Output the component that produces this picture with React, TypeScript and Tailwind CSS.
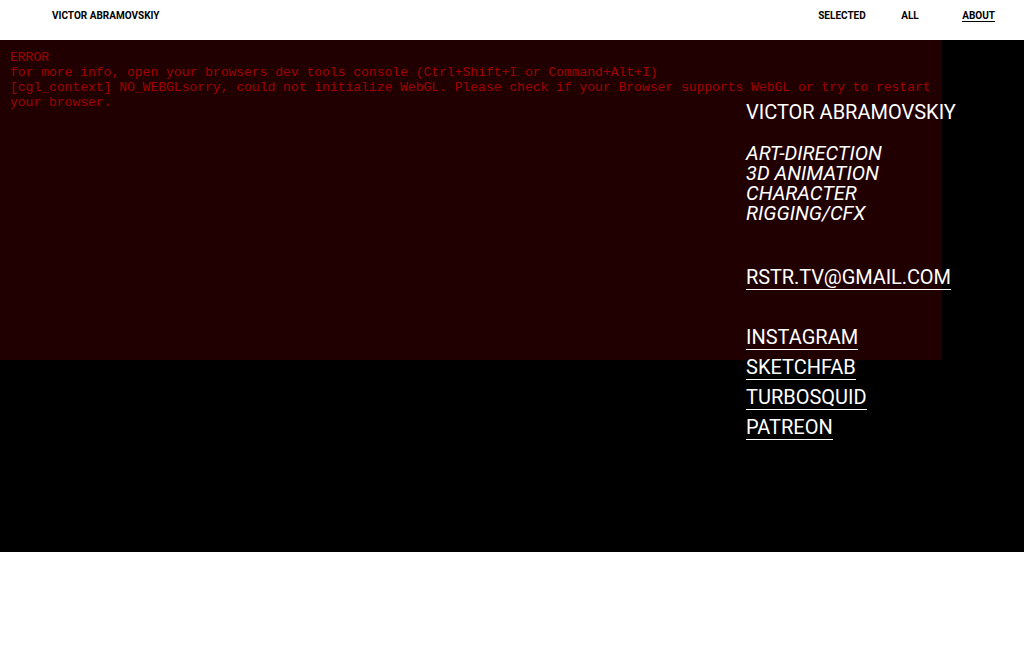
import React from 'react';

const links = ['INSTAGRAM', 'SKETCHFAB', 'TURBOSQUID', 'PATREON'];

export default function App() {
  return (
    <div className="w-[1024px] h-[672px] bg-white font-['Roboto',sans-serif]">
      <header className="h-10 flex items-start pt-[10px] text-[10px] font-bold text-black leading-[12px]">
        <div className="pl-[52px]">VICTOR ABRAMOVSKIY</div>
        <nav className="ml-auto flex">
          <a className="w-[83px]">SELECTED</a>
          <a className="w-[61px]">ALL</a>
          <a className="mr-[29px] border-b border-black leading-[11px]">ABOUT</a>
        </nav>
      </header>

      <section className="relative h-[512px] bg-black">
        <div className="absolute left-0 top-0 w-[942px] h-[320px] bg-[#200000] px-[10px] pt-[10px] font-['Liberation_Mono',monospace] text-[13px] leading-[15px] text-[#a00000]">
          ERROR
          <br />
          for more info, open your browsers dev tools console (Ctrl+Shift+I or Command+Alt+I)
          <br />
          [cgl_context] NO_WEBGLsorry, could not initialize WebGL. Please check if your Browser supports WebGL or try to restart your browser.
        </div>

        <div className="relative pl-[746px] pt-[62px] text-white text-[20px] leading-[20px]">
          <div>VICTOR ABRAMOVSKIY</div>
          <div className="mt-[21px] italic">
            <div>ART-DIRECTION</div>
            <div>3D ANIMATION</div>
            <div>CHARACTER</div>
            <div>RIGGING/CFX</div>
          </div>
          <div className="mt-[44px]">
            <a className="inline-block border-b border-white pb-[2px] tracking-[-0.1px]">RSTR.TV@GMAIL.COM</a>
          </div>
          <div className="mt-[37px] flex flex-col items-start gap-[7px]">
            {links.map((l) => (
              <a key={l} className="inline-block border-b border-white pb-[2px]">
                {l}
              </a>
            ))}
          </div>
        </div>
      </section>
    </div>
  );
}
